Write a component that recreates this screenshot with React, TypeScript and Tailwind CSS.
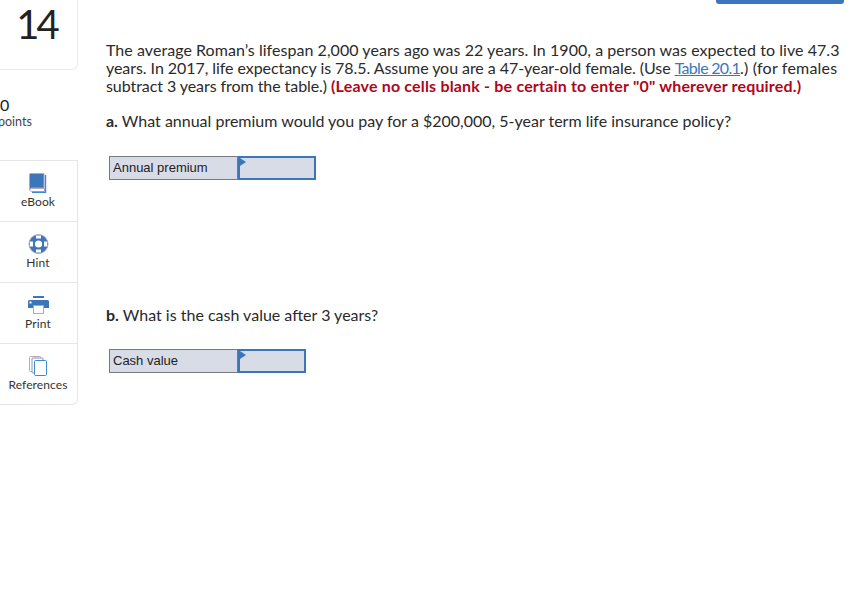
const tools = [
  { label: 'eBook', icon: <BookIcon /> },
  { label: 'Hint', icon: <HintIcon /> },
  { label: 'Print', icon: <PrintIcon /> },
  { label: 'References', icon: <RefsIcon /> },
];

function BookIcon() {
  return (
    <svg width="18" height="20" viewBox="0 0 18 20">
      <path d="M0.5 17V1.5C0.5 1 1 0.5 1.5 0.5H15V15H3C1.5 15 0.5 16 0.5 17Z" fill="#3b76bb" stroke="#b9a3c4" strokeWidth="1" />
      <path d="M1 17C1 16 2 15.5 3 15.5H15.5V18.5H3C2 18.5 1 18 1 17Z" fill="#fff" stroke="#b9a3c4" strokeWidth="1" />
      <path d="M16.5 2V19.5H3" fill="none" stroke="#3b8ad0" strokeWidth="1.4" />
    </svg>
  );
}

function HintIcon() {
  return (
    <svg width="21" height="20" viewBox="0 0 21 20">
      <circle cx="10.5" cy="10" r="9.5" fill="#3b76bb" stroke="#b9a3c4" strokeWidth="1" />
      <circle cx="10.5" cy="10" r="3.6" fill="#fff" />
      <rect x="8" y="1.5" width="5" height="3" fill="#fff" />
      <rect x="8" y="15.5" width="5" height="3" fill="#fff" />
      <rect x="2" y="7.5" width="3" height="5" fill="#fff" />
      <rect x="16" y="7.5" width="3" height="5" fill="#fff" />
    </svg>
  );
}

function PrintIcon() {
  return (
    <svg width="21" height="18" viewBox="0 0 21 18">
      <rect x="5" y="0" width="11" height="2" fill="#3b76bb" />
      <path d="M1.5 4H19.5C20.3 4 21 4.7 21 5.5V12H16V9H5V12H0V5.5C0 4.7 0.7 4 1.5 4Z" fill="#3b76bb" />
      <rect x="1.5" y="5.5" width="2" height="2" fill="#fff" />
      <rect x="5.5" y="9.5" width="10" height="8" fill="#fff" stroke="#b9a3c4" />
    </svg>
  );
}

function RefsIcon() {
  return (
    <svg width="18" height="20" viewBox="0 0 18 20">
      <rect x="0.5" y="0.5" width="11" height="15" rx="1" fill="#fff" stroke="#b9a3c4" />
      <rect x="3" y="2" width="11" height="15" rx="1" fill="#fff" stroke="#8d8db8" />
      <rect x="5.5" y="4.5" width="12" height="15" rx="1" fill="#fff" stroke="#3b8ad0" />
    </svg>
  );
}

function AnswerTable({ label, inputWidth }: { label: string; inputWidth: string }) {
  return (
    <div className="flex ml-[3px] h-[24px] w-fit border border-[#77797f] bg-[#d8dce7]">
      <div className="w-[128px] border-r border-[#77797f] px-[3px] font-['Liberation_Sans',sans-serif] text-[13px] leading-[21px] text-[#222]">
        {label}
      </div>
      <div className={`relative ${inputWidth} border-2 border-[#3b76bb] -my-px -mr-px`}>
        <div className="absolute left-0 top-0 h-0 w-0 border-y-[4px] border-l-[6px] border-y-transparent border-l-[#3b76bb]" />
      </div>
    </div>
  );
}

export default function App() {
  return (
    <div className="flex h-[592px] w-[859px] overflow-hidden bg-white font-['Lato',sans-serif] text-[#2a2a2a]">
      <aside className="w-[78px] shrink-0 overflow-hidden">
        <div className="-mt-[10px] h-[80px] rounded-br-md border-b border-r border-[#ececec] pt-[9px] pr-[4px] text-center">
          <div className="text-[40px] leading-[50px] tracking-[-3px] text-[#222]">14</div>
        </div>
        <div className="mt-[26px] text-[16px] leading-[18px] text-[#222]">0</div>
        <div className="-mt-px -ml-[2px] text-[12.5px] leading-[17px] text-[#444]">points</div>
        <div className="mt-[30px] rounded-br-md border-y border-r border-[#e6e6e6]">
          {tools.map((t, i) => (
            <div
              key={t.label}
              className={`flex flex-col items-center pr-[1px] ${i > 0 ? 'h-[61px] border-t border-[#e6e6e6] pt-[12px]' : 'h-[60px] pt-[12px]'}`}
            >
              <div className="flex h-[20px] items-center">{t.icon}</div>
              <div className="mt-[2px] text-[12px] leading-[14px] tracking-[0.1px] text-[#333]">{t.label}</div>
            </div>
          ))}
        </div>
      </aside>

      <main className="flex-1 pl-[28px] pr-[15px]">
        <div className="flex justify-end">
          <div className="h-[4px] w-[128px] rounded-b-[3px] bg-[#3b76bb]" />
        </div>
        <p className="mt-[37px] whitespace-nowrap text-[16px] leading-[18px]">
          <span className="block tracking-[0.05px]">
            The average Roman’s lifespan 2,000 years ago was 22 years. In 1900, a person was expected to live 47.3
          </span>
          <span className="block">
            <span className="tracking-[-0.06px]">
              years. In 2017, life expectancy is 78.5. Assume you are a 47-year-old female. (Use{' '}
            </span>
            <span className="tracking-[-0.7px] text-[#3b76bb] underline">Table 20.1</span>
            <span className="tracking-[0.2px]">.) (for females</span>
          </span>
          <span className="block">
            <span className="tracking-[-0.07px]">subtract 3 years from the table.) </span>
            <strong className="font-bold tracking-[0.18px] text-[#b0061b]">
              (Leave no cells blank - be certain to enter "0" wherever required.)
            </strong>
          </span>
        </p>
        <p className="mt-[17px] text-[16px] leading-[18px]">
          <strong>a.</strong> What annual premium would you pay for a $200,000, 5-year term life insurance policy?
        </p>
        <div className="mt-[26px]">
          <AnswerTable label="Annual premium" inputWidth="w-[78px]" />
        </div>
        <p className="mt-[126px] text-[16px] leading-[18px]">
          <strong>b.</strong> What is the cash value after 3 years?
        </p>
        <div className="mt-[25px]">
          <AnswerTable label="Cash value" inputWidth="w-[68px]" />
        </div>
      </main>
    </div>
  );
}
